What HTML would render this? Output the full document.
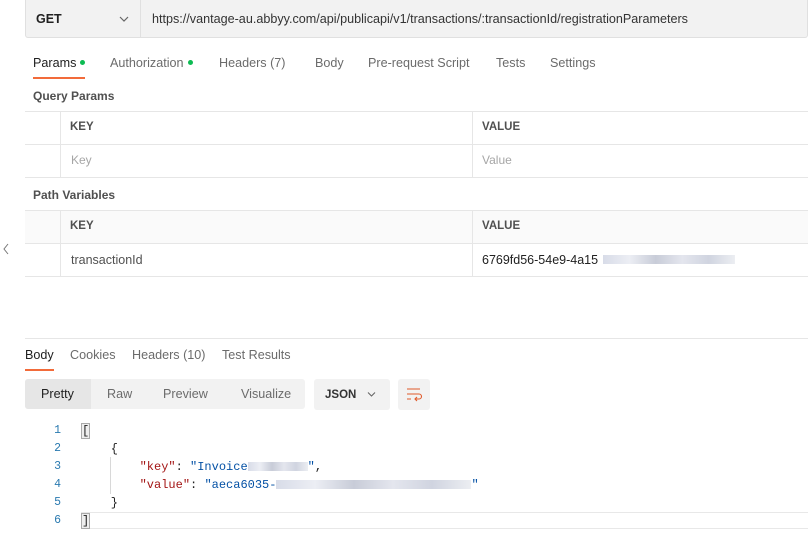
<!DOCTYPE html>
<html><head><meta charset="utf-8"><style>
*{margin:0;padding:0;box-sizing:border-box}
body{width:808px;height:537px;background:#fff;font-family:"Liberation Sans",sans-serif;font-size:12px;color:#212121;position:relative;overflow:hidden}
.a{position:absolute;white-space:nowrap}
.hl{position:absolute;height:1px;background:#e6e6e6}
.vl{position:absolute;width:1px;background:#e6e6e6}
.tab{color:#6b6b6b;font-size:12.6px}
.th{font-weight:bold;color:#505050;font-size:11.5px}
.dot{display:inline-block;width:5px;height:5px;border-radius:50%;background:#0cbb52;margin-left:4px;vertical-align:2px}
.mono{font-family:"Liberation Mono",monospace;font-size:12px}
.blur{position:absolute;height:9px;background:linear-gradient(90deg,#d8dce8,#eceef4,#c8ccd8,#e4e6ee,#d0d4e0,#eceef2);}
.ib{display:inline-block;height:9px;vertical-align:-1px;background:linear-gradient(90deg,#d8dce8,#eceef4,#c8ccd8,#e4e6ee,#d0d4e0,#eceef2)}
</style></head><body>
<div class="a" style="left:25px;top:0;width:783px;height:38px;background:#f2f2f2;border:1px solid #e0e0e0;border-top:none;border-radius:0 0 3px 3px"></div>
<div class="vl" style="left:140px;top:0;height:38px;background:#e0e0e0"></div>
<div class="a" style="left:36px;top:12px;font-weight:bold;font-size:12.5px">GET</div>
<svg class="a" style="left:119px;top:15px" width="10" height="8"><path d="M1 2l4 4 4-4" fill="none" stroke="#666" stroke-width="1.2"/></svg>
<div class="a" style="left:152px;top:12px;font-size:12.6px;color:#333">https://vantage-au.abbyy.com/api/publicapi/v1/transactions/:transactionId/registrationParameters</div>

<div class="a tab" style="left:33px;top:56px;color:#212121">Params<span class="dot"></span></div>
<div class="a" style="left:33px;top:77px;width:52px;height:2px;background:#f26b3a"></div>
<div class="a tab" style="left:110px;top:56px">Authorization<span class="dot"></span></div>
<div class="a tab" style="left:219px;top:56px">Headers (7)</div>
<div class="a tab" style="left:315px;top:56px">Body</div>
<div class="a tab" style="left:368px;top:56px">Pre-request Script</div>
<div class="a tab" style="left:496px;top:56px">Tests</div>
<div class="a tab" style="left:550px;top:56px">Settings</div>

<div class="a" style="left:33px;top:89px;font-weight:bold;color:#505050;font-size:12px">Query Params</div>
<div class="hl" style="left:25px;top:111px;width:783px"></div>
<div class="hl" style="left:25px;top:144px;width:783px"></div>
<div class="hl" style="left:25px;top:177px;width:783px"></div>
<div class="vl" style="left:60px;top:111px;height:66px"></div>
<div class="vl" style="left:472px;top:111px;height:66px"></div>
<div class="a th" style="left:70px;top:121px">KEY</div>
<div class="a th" style="left:482px;top:121px">VALUE</div>
<div class="a" style="left:71px;top:153px;color:#a6a6a6">Key</div>
<div class="a" style="left:482px;top:153px;color:#a6a6a6">Value</div>

<div class="a" style="left:33px;top:188px;font-weight:bold;color:#505050;font-size:12px">Path Variables</div>
<div class="a" style="left:25px;top:210px;width:783px;height:33px;background:#fafafa"></div>
<div class="hl" style="left:25px;top:210px;width:783px"></div>
<div class="hl" style="left:25px;top:243px;width:783px"></div>
<div class="hl" style="left:25px;top:276px;width:783px"></div>
<div class="vl" style="left:60px;top:210px;height:66px"></div>
<div class="vl" style="left:472px;top:210px;height:66px"></div>
<div class="a th" style="left:70px;top:220px">KEY</div>
<div class="a th" style="left:482px;top:220px">VALUE</div>
<div class="a" style="left:71px;top:253px;color:#505050;font-size:12.5px">transactionId</div>
<div class="a" style="left:482px;top:253px;color:#212121;font-size:12.5px">6769fd56-54e9-4a15</div>
<div class="blur" style="left:603px;top:255px;width:132px"></div>
<svg class="a" style="left:2px;top:243px" width="8" height="12"><path d="M6 1L2 6l4 5" fill="none" stroke="#777" stroke-width="1"/></svg>

<div class="hl" style="left:25px;top:338px;width:783px"></div>
<div class="a tab" style="left:25px;top:348px;color:#212121">Body</div>
<div class="a" style="left:25px;top:369px;width:29px;height:2px;background:#f26b3a"></div>
<div class="a tab" style="left:70px;top:348px">Cookies</div>
<div class="a tab" style="left:132px;top:348px">Headers (10)</div>
<div class="a tab" style="left:222px;top:348px">Test Results</div>

<div class="a" style="left:25px;top:379px;width:280px;height:30px;background:#f2f2f2;border-radius:3px"></div>
<div class="a" style="left:25px;top:379px;width:66px;height:30px;background:#e6e6e6;border-radius:3px 0 0 3px"></div>
<div class="a" style="left:41px;top:387px;font-size:12.6px;color:#212121">Pretty</div>
<div class="a" style="left:107px;top:387px;font-size:12.6px;color:#6b6b6b">Raw</div>
<div class="a" style="left:163px;top:387px;font-size:12.6px;color:#6b6b6b">Preview</div>
<div class="a" style="left:241px;top:387px;font-size:12.6px;color:#6b6b6b">Visualize</div>
<div class="a" style="left:314px;top:379px;width:76px;height:31px;background:#f2f2f2;border-radius:3px"></div>
<div class="a" style="left:325px;top:389px;font-weight:bold;font-size:11.5px;color:#333">JSON</div>
<svg class="a" style="left:367px;top:391px" width="9" height="7"><path d="M1 1.5l3.5 3.5 3.5-3.5" fill="none" stroke="#666" stroke-width="1.1"/></svg>
<div class="a" style="left:398px;top:379px;width:32px;height:31px;background:#f2f2f2;border-radius:3px"></div>
<svg class="a" style="left:405px;top:387px" width="18" height="15"><path d="M2 2h13M2 7h12a2.5 2.5 0 0 1 0 5h-4M12 10l-2 2 2 2M2 12h4" fill="none" stroke="#e05a2b" stroke-width="1.1"/></svg>

<div class="a" style="left:81px;top:512px;width:727px;height:17px;border-top:1px solid #e8e8e8;border-bottom:1px solid #e8e8e8"></div>
<div class="vl" style="left:110px;top:457px;height:37px;background:#d8d8d8"></div>
<div class="a mono" style="left:53px;top:422px;line-height:18px;color:#2a7ab0;text-align:right;width:8px;font-size:11.5px">1<br>2<br>3<br>4<br>5<br>6</div>
<div class="a mono" style="left:82px;top:422px;line-height:18px;color:#212121">
<span style="outline:1px solid #aaa;background:#eee">[</span><br>
&nbsp;&nbsp;&nbsp;&nbsp;{<br>
&nbsp;&nbsp;&nbsp;&nbsp;&nbsp;&nbsp;&nbsp;&nbsp;<span style="color:#a31515">"key"</span>: <span style="color:#0451a5">"Invoice<span class="ib" style="width:60px"></span>"</span>,<br>
&nbsp;&nbsp;&nbsp;&nbsp;&nbsp;&nbsp;&nbsp;&nbsp;<span style="color:#a31515">"value"</span>: <span style="color:#0451a5">"aeca6035-<span class="ib" style="width:195px"></span>"</span><br>
&nbsp;&nbsp;&nbsp;&nbsp;}<br>
<span style="outline:1px solid #aaa;background:#eee">]</span></div>
</body></html>
